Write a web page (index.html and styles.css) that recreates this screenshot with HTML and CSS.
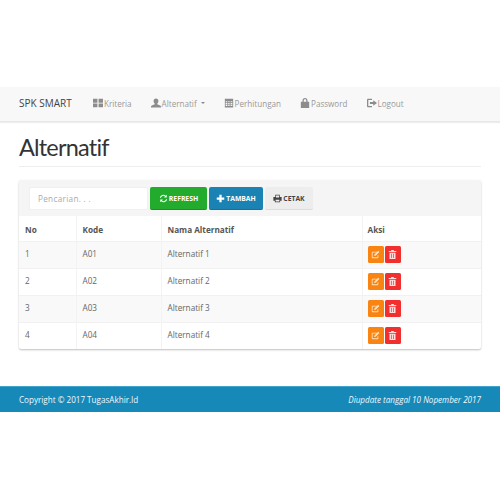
FILE: index.html
```html
<!DOCTYPE html>
<html lang="id">
<head>
<meta charset="utf-8">
<title>Alternatif</title>
<link rel="stylesheet" href="styles.css">
</head>
<body>
<nav class="navbar">
  <span class="brand">SPK SMART</span>
  <a class="nav-item"><svg class="ico" viewBox="0 0 12 12"><path d="M0 1h5.300v4.600H0zM6.700 1H12v4.600H6.700zM0 6.600h5.300v4.600H0zM6.700 6.600H12v4.600H6.700z"/></svg>Kriteria</a>
  <a class="nav-item"><svg class="ico" viewBox="0 0 12 12"><path d="M6 .5c1.800 0 2.900 1.300 2.900 3.200 0 1.300-.6 2.500-1.400 3.100v.8l3.500 1.400c.6.300 1 .8 1 1.500v.9H0v-.9c0-.7.400-1.200 1-1.500l3.500-1.400v-.8C3.700 6.200 3.100 5 3.100 3.700 3.100 1.800 4.200.5 6 .5z"/></svg>Alternatif<span class="caret"></span></a>
  <a class="nav-item"><svg class="ico" viewBox="0 0 12 12"><path fill-rule="evenodd" d="M1 1h10v10.500H1zM2 3.800v1.400h1.700V3.800zm2.500 0v1.400h1.200V3.800zm2 0v1.400h1.200V3.800zm2 0v1.400H10V3.800zM2 6v1.400h1.700V6zm2.500 0v1.400h1.200V6zm2 0v1.400h1.200V6zm2 0v1.400H10V6zM2 8.200v1.400h1.700V8.200zm2.500 0v1.400h1.200V8.200zm2 0v1.400h1.200V8.200zm2 0v1.400H10V8.200z"/></svg>Perhitungan</a>
  <a class="nav-item"><svg class="ico" viewBox="0 0 12 12"><path fill-rule="evenodd" d="M3 4.500V3c0-1.800 1.200-3 3-3s3 1.200 3 3v1.500h2V12H1V4.500zm1.500 0h3V3c0-1-.6-1.600-1.500-1.600S4.500 2 4.500 3z"/></svg>Password</a>
  <a class="nav-item"><svg class="ico" viewBox="0 0 12 12"><path d="M0 2.500C0 1.700.7 1 1.500 1H6v1.400H1.600v7.200H6V11H1.500C.7 11 0 10.300 0 9.500z"/><path d="M7.500 2.800 12 6 7.500 9.200V7.300H3.500V4.700h4z"/></svg>Logout</a>
</nav>

<main class="content">
  <h1 class="title">Alternatif</h1>
  <section class="panel">
    <div class="toolbar">
      <input class="search" type="text" placeholder="Pencarian. . .">
      <button class="btn btn-green"><svg class="btn-ico" viewBox="0 0 12 12"><path d="M10.300 1v3.600H6.700l1.300-1.300A3.400 3.400 0 0 0 2.500 5H1.100a4.800 4.800 0 0 1 7.900-2.700zM1.700 11V7.400h3.600L4 8.700A3.400 3.400 0 0 0 9.500 7h1.400A4.800 4.800 0 0 1 3 9.700z"/></svg>REFRESH</button>
      <button class="btn btn-blue"><svg class="btn-ico" viewBox="0 0 12 12"><path d="M4.500 1h3v3.500H11v3H7.500V11h-3V7.500H1v-3h3.500z"/></svg>TAMBAH</button>
      <button class="btn btn-grey"><svg class="btn-ico" viewBox="0 0 12 12"><path fill-rule="evenodd" d="M3 1h6v3h2.500v5H9.500v2h-7V9H.5V4H3zm1 1v2.500h4V2zM3.500 7.500V10h5V7.500z"/></svg>CETAK</button>
    </div>
    <table class="grid">
      <colgroup><col class="c1"><col class="c2"><col class="c3"><col class="c4"></colgroup>
      <thead>
        <tr><th>No</th><th>Kode</th><th>Nama Alternatif</th><th>Aksi</th></tr>
      </thead>
      <tbody>
        <tr><td>1</td><td>A01</td><td>Alternatif 1</td><td><span class="actions"><a class="act act-edit"><svg viewBox="0 0 12 12"><path d="M8 2.200H2.200c-.7 0-1.200.5-1.200 1.200v6.400c0 .7.500 1.200 1.200 1.200h6.400c.7 0 1.200-.5 1.200-1.200V7H8.700v2.700H2.100V3.300H7zM9.600 1l1.600 1.600-5 5-2.100.5.500-2.100z"/></svg></a><a class="act act-del"><svg viewBox="0 0 12 12"><path fill-rule="evenodd" d="M4.500 0h3l.6 1.300H11v1.400H1V1.300h2.900zM2 3.500h8V12H2zM4 5v5.500h.9V5zm3.100 0v5.500H8V5z"/></svg></a></span></td></tr>
        <tr><td>2</td><td>A02</td><td>Alternatif 2</td><td><span class="actions"><a class="act act-edit"><svg viewBox="0 0 12 12"><path d="M8 2.200H2.200c-.7 0-1.200.5-1.200 1.200v6.400c0 .7.500 1.200 1.200 1.200h6.400c.7 0 1.200-.5 1.200-1.200V7H8.700v2.700H2.100V3.300H7zM9.600 1l1.600 1.600-5 5-2.100.5.500-2.100z"/></svg></a><a class="act act-del"><svg viewBox="0 0 12 12"><path fill-rule="evenodd" d="M4.500 0h3l.6 1.300H11v1.400H1V1.300h2.900zM2 3.500h8V12H2zM4 5v5.500h.9V5zm3.100 0v5.500H8V5z"/></svg></a></span></td></tr>
        <tr><td>3</td><td>A03</td><td>Alternatif 3</td><td><span class="actions"><a class="act act-edit"><svg viewBox="0 0 12 12"><path d="M8 2.200H2.200c-.7 0-1.200.5-1.200 1.200v6.400c0 .7.500 1.200 1.200 1.200h6.400c.7 0 1.200-.5 1.200-1.200V7H8.700v2.700H2.100V3.300H7zM9.600 1l1.600 1.600-5 5-2.100.5.500-2.100z"/></svg></a><a class="act act-del"><svg viewBox="0 0 12 12"><path fill-rule="evenodd" d="M4.500 0h3l.6 1.300H11v1.400H1V1.300h2.900zM2 3.500h8V12H2zM4 5v5.500h.9V5zm3.100 0v5.500H8V5z"/></svg></a></span></td></tr>
        <tr><td>4</td><td>A04</td><td>Alternatif 4</td><td><span class="actions"><a class="act act-edit"><svg viewBox="0 0 12 12"><path d="M8 2.200H2.200c-.7 0-1.200.5-1.200 1.200v6.400c0 .7.500 1.200 1.200 1.200h6.400c.7 0 1.200-.5 1.200-1.200V7H8.700v2.700H2.100V3.300H7zM9.600 1l1.600 1.600-5 5-2.100.5.500-2.100z"/></svg></a><a class="act act-del"><svg viewBox="0 0 12 12"><path fill-rule="evenodd" d="M4.500 0h3l.6 1.300H11v1.400H1V1.300h2.900zM2 3.500h8V12H2zM4 5v5.500h.9V5zm3.100 0v5.500H8V5z"/></svg></a></span></td></tr>
      </tbody>
    </table>
  </section>
</main>

<footer class="footer">
  <span>Copyright © 2017 TugasAkhir.Id</span>
  <em>Diupdate tanggal 10 Nopember 2017</em>
</footer>
</body>
</html>
```
FILE: styles.css
```css
* { box-sizing: border-box; }
html, body { margin: 0; background: #fff; }
body {
  padding-top: 87px;
  font-family: "Open Sans", "Noto Sans", sans-serif;
  font-size: 8.2px;
  color: #555;
}
.navbar {
  display: flex;
  align-items: center;
  height: 35px;
  padding: 0 0 2px 19px;
  background: #f8f8f8;
  border-bottom: 1px solid #e7e7e7;
  box-shadow: 0 1px 1px #eee;
}
.brand {
  width: 74px;
  font-size: 10px;
  font-weight: 500;
  color: #444;
}
.nav-item {
  display: flex;
  align-items: center;
  margin-right: 19px;
  color: #999;
  font-size: 8.1px;
}
.ico { width: 10px; height: 10px; margin-right: 1px; fill: #8c8c8c; }
.caret {
  width: 0;
  height: 0;
  margin-left: 4px;
  border-left: 2.5px solid transparent;
  border-right: 2.5px solid transparent;
  border-top: 2.5px solid #888;
}
.content { padding: 0 19px; }
.title {
  margin: 0 0 13px;
  height: 45px;
  padding-top: 9px;
  border-bottom: 1px solid #eee;
  font-family: "Lato", "Open Sans", sans-serif;
  font-size: 23.5px;
  letter-spacing: -.8px;
  line-height: 32px;
  font-weight: 400;
  color: #333;
}
.panel {
  background: #fff;
  border-radius: 2px;
  box-shadow: 0 1px 2px rgba(0,0,0,.25);
}
.toolbar {
  display: flex;
  align-items: center;
  height: 36px;
  padding: 1px 0 0 10px;
  background: #f5f5f5;
}
.search {
  width: 119px;
  height: 23px;
  margin-right: 2px;
  padding: 0 8px;
  border: 1px solid #f0f0f0;
  border-radius: 2px;
  background: #fff;
  font: 8.2px "Open Sans", sans-serif;
}
.search::placeholder { color: #aaa; letter-spacing: .3px; }
.btn {
  display: flex;
  align-items: center;
  justify-content: center;
  height: 23px;
  margin-right: 2px;
  padding: 0;
  border: 0;
  border-radius: 2px;
  font: 700 6.8px "Open Sans", sans-serif;
}
.btn-green { width: 57px; background: #22ab2c; color: #fff; fill: #fff; border-bottom: 1px solid #1a9024; }
.btn-blue { width: 54px; background: #1a83b3; color: #fff; fill: #fff; border-bottom: 1px solid #156f99; }
.btn-grey { width: 48px; margin-left: 0; background: #ededed; color: #444; fill: #444; border-bottom: 1px solid #ddd; }
.btn-ico { width: 9px; height: 9px; margin-right: 1px; }
.grid {
  width: 100%;
  border-collapse: collapse;
  table-layout: fixed;
}
.c1 { width: 57px; }
.c2 { width: 85px; }
.c3 { width: 201px; }
th, td {
  padding: 0 6px;
  border-right: 1px solid #f3f3f3;
  text-align: left;
  font-size: 8.2px;
}
th:last-child, td:last-child { border-right: 0; padding-left: 5px; }
th { height: 25px; padding-top: 2px; font-weight: 700; color: #555; }
td { height: 27px; padding-bottom: 2px; color: #666; border-top: 1px solid #f1f1f1; }
tbody tr:nth-child(odd) { background: #f9f9f9; }
.actions { display: flex; gap: 1px; padding-top: 2px; }
.act {
  display: flex;
  align-items: center;
  justify-content: center;
  width: 16px;
  height: 17px;
  border-radius: 1.5px;
}
.act svg { width: 9px; height: 9px; }
.act-edit { background: #f98411; fill: #fde3c4; }
.act-del { background: #f22f2f; fill: #fdd; }
.footer {
  display: flex;
  align-items: center;
  justify-content: space-between;
  height: 26px;
  margin-top: 37px;
  padding: 0 19px;
  background: #1689b9;
  border-top: 1px solid #3fa3cc;
  color: #f0f8fc;
  font-size: 8.1px;
}
```
